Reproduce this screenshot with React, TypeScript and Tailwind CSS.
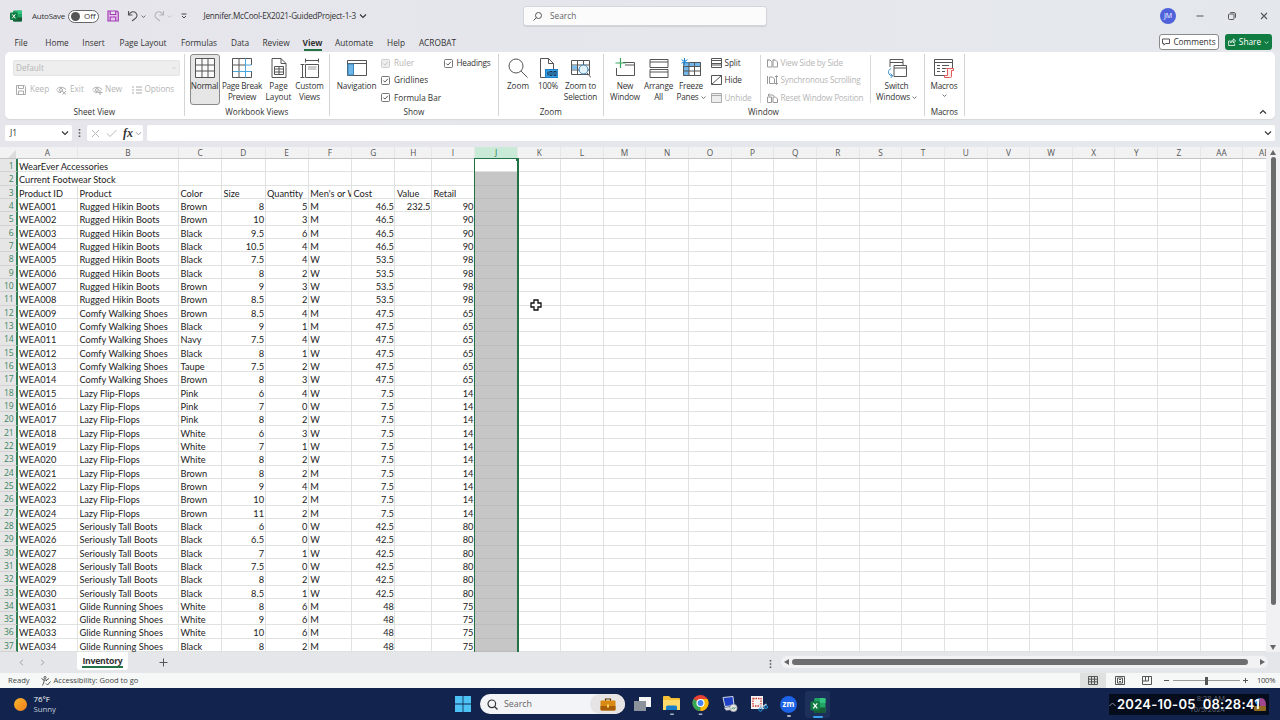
import type { ReactNode } from "react"

const cols = [
  { name: "A", w: "w-[60.5px]" },
  { name: "B", w: "w-[101px]" },
  { name: "C", w: "w-[43px]" },
  { name: "D", w: "w-[43.5px]" },
  { name: "E", w: "w-[43.3px]" },
  { name: "F", w: "w-[43.2px]" },
  { name: "G", w: "w-[43.5px]" },
  { name: "H", w: "w-[36.5px]" },
  { name: "I", w: "w-[43px]" },
  { name: "J", w: "w-[43.5px]" },
  ..."K L M N O P Q R S T U V W X Y Z AA AB".split(" ").map((name) => ({ name, w: "w-[42.65px]" })),
]

const boots = "Rugged Hikin Boots"
const shoes = "Comfy Walking Shoes"
const flops = "Lazy Flip-Flops"
const tall = "Seriously Tall Boots"
const glide = "Glide Running Shoes"

// product, color, size, quantity, men/women, cost, retail
const stock: (string | number)[][] = [
  [boots, "Brown", 8, 5, "M", 46.5, 90],
  [boots, "Brown", 10, 3, "M", 46.5, 90],
  [boots, "Black", 9.5, 6, "M", 46.5, 90],
  [boots, "Black", 10.5, 4, "M", 46.5, 90],
  [boots, "Black", 7.5, 4, "W", 53.5, 98],
  [boots, "Black", 8, 2, "W", 53.5, 98],
  [boots, "Brown", 9, 3, "W", 53.5, 98],
  [boots, "Brown", 8.5, 2, "W", 53.5, 98],
  [shoes, "Brown", 8.5, 4, "M", 47.5, 65],
  [shoes, "Black", 9, 1, "M", 47.5, 65],
  [shoes, "Navy", 7.5, 4, "W", 47.5, 65],
  [shoes, "Black", 8, 1, "W", 47.5, 65],
  [shoes, "Taupe", 7.5, 2, "W", 47.5, 65],
  [shoes, "Brown", 8, 3, "W", 47.5, 65],
  [flops, "Pink", 6, 4, "W", 7.5, 14],
  [flops, "Pink", 7, 0, "W", 7.5, 14],
  [flops, "Pink", 8, 2, "W", 7.5, 14],
  [flops, "White", 6, 3, "W", 7.5, 14],
  [flops, "White", 7, 1, "W", 7.5, 14],
  [flops, "White", 8, 2, "W", 7.5, 14],
  [flops, "Brown", 8, 2, "M", 7.5, 14],
  [flops, "Brown", 9, 4, "M", 7.5, 14],
  [flops, "Brown", 10, 2, "M", 7.5, 14],
  [flops, "Brown", 11, 2, "M", 7.5, 14],
  [tall, "Black", 6, 0, "W", 42.5, 80],
  [tall, "Black", 6.5, 0, "W", 42.5, 80],
  [tall, "Black", 7, 1, "W", 42.5, 80],
  [tall, "Black", 7.5, 0, "W", 42.5, 80],
  [tall, "Black", 8, 2, "W", 42.5, 80],
  [tall, "Black", 8.5, 1, "W", 42.5, 80],
  [glide, "White", 8, 6, "M", 48, 75],
  [glide, "White", 9, 6, "M", 48, 75],
  [glide, "White", 10, 6, "M", 48, 75],
  [glide, "Black", 8, 2, "M", 48, 75],
]

const rows: (string | number)[][] = [
  ["WearEver Accessories"],
  ["Current Footwear Stock"],
  ["Product ID", "Product", "Color", "Size", "Quantity", "Men's or W", "Cost", "Value", "Retail"],
  ...stock.map(([product, color, size, qty, mw, cost, retail], i) => [
    `WEA${String(i + 1).padStart(3, "0")}`,
    product,
    color,
    size,
    qty,
    mw,
    cost,
    i === 0 ? 232.5 : "",
    retail,
  ]),
]

function Svg({ w = 20, h = 20, box, className = "", children }: { w?: number; h?: number; box?: string; className?: string; children: ReactNode }) {
  return (
    <svg width={w} height={h} viewBox={box ?? `0 0 ${w} ${h}`} fill="none" stroke="#555" strokeWidth="1" className={`shrink-0 ${className}`}>
      {children}
    </svg>
  )
}

function Chevron({ size = 7, className = "" }: { size?: number; className?: string }) {
  return (
    <svg width={size} height={size} viewBox="0 0 8 8" fill="none" stroke="currentColor" strokeWidth="1.1" className={`shrink-0 ${className}`}>
      <path d="M1 2.5 4 5.5 7 2.5" />
    </svg>
  )
}

function TitleBar() {
  return (
    <div className="flex h-8 items-center pr-[12px] pl-[10px] whitespace-nowrap">
      <Svg w={12} h={12} className="mr-[10px]">
        <rect x="3" y="0.5" width="9" height="11" rx="1" fill="#21a366" stroke="none" />
        <path d="M7.500 .5H11a1 1 0 0 1 1 1v2.500H7.500z" fill="#33c481" stroke="none" />
        <path d="M3 7.500h9V10.500a1 1 0 0 1-1 1H4a1 1 0 0 1-1-1z" fill="#185c37" stroke="none" />
        <rect x="0" y="2.500" width="7.500" height="7.500" rx="1" fill="#107c41" stroke="none" />
        <path d="m2.200 4.300 3.200 4M5.400 4.300l-3.200 4" stroke="#fff" />
      </Svg>
      <span className="w-[32px] text-[8px] tracking-[-0.25px]">AutoSave</span>
      <div className="ml-[4px] flex h-[13px] w-[31px] items-center rounded-full border border-[#666] bg-white pl-[2px]">
        <span className="size-[9px] rounded-full bg-[#555]" />
        <span className="ml-[4px] text-[8px]">Off</span>
      </div>
      <Svg w={12} h={12} className="ml-[7.500px]">
        <path d="M1 1h9l1.300 1.300V11H1zM3.200 1v3.500h5.500V1M3.200 11V7h5.500v4" stroke="#a23fb5" strokeWidth="1.200" fill="#e9c5ef" />
      </Svg>
      <Svg w={12} h={12} className="ml-[8px]">
        <path d="M1.500 1v4h4M1.700 4.800C4 1.200 7 1 8.800 2.800s1.500 4-.3 5.500L5 11" strokeWidth="1.100" />
      </Svg>
      <Chevron size={5} className="ml-[2px]" />
      <Svg w={12} h={12} className="ml-[7px]">
        <path d="M10.500 1v4h-4M10.300 4.800C8 1.200 5 1 3.200 2.800s-1.500 4 .3 5.500L7 11" stroke="#b4b4ba" strokeWidth="1.100" />
      </Svg>
      <Chevron size={5} className="ml-[2px] text-[#b4b4ba]" />
      <Svg w={6} h={6} className="ml-[9px]">
        <path d="M.5 1h5M1 3l2 2 2-2" stroke="#444" />
      </Svg>
      <span className="ml-[17px] w-[154px] text-[8.200px] tracking-[-0.25px]">Jennifer.McCool-EX2021-GuidedProject-1-3</span>
      <Chevron size={8} className="ml-[1.500px]" />
      <div className="ml-[156px] flex h-[20px] w-[244px] items-center rounded-[3px] border border-[#d3d5da] bg-[#fbfbfc] pl-[9px] text-[#666] shadow-[0_1px_1px_#cfd1d6]">
        <Svg w={9} h={9}>
          <circle cx="5.500" cy="3.500" r="3" />
          <path d="M3.400 5.600.5 8.500" />
        </Svg>
        <span className="ml-[8px] text-[8.300px]">Search</span>
      </div>
      <span className="ml-auto flex size-4 items-center justify-center rounded-full bg-[#4f62dc] text-[7px] text-white">JM</span>
      <Svg w={8} h={8} className="ml-[20px]">
        <path d="M.5 4h7" />
      </Svg>
      <Svg w={8} h={8} className="ml-[24px]">
        <rect x=".5" y="2" width="5.500" height="5.500" rx="1" />
        <path d="M2.300.6H6A1.500 1.500 0 0 1 7.500 2v3.700" />
      </Svg>
      <Svg w={8} h={8} className="ml-[24px]">
        <path d="m1 1 6 6M7 1 1 7" strokeWidth="1.100" />
      </Svg>
    </div>
  )
}

const menu = [
  ["File", "w-[12px]"],
  ["Home", "w-[23px] ml-[18.5px]"],
  ["Insert", "w-[22px] ml-[14px]"],
  ["Page Layout", "w-[48px] ml-[14.5px]"],
  ["Formulas", "w-[36px] ml-[14px]"],
  ["Data", "w-[18px] ml-[14px]"],
  ["Review", "w-[27px] ml-[13.5px]"],
  ["View", "w-[18px] ml-[14px]"],
  ["Automate", "w-[38px] ml-[13.5px]"],
  ["Help", "w-[18px] ml-[14px]"],
  ["ACROBAT", "w-[38px] ml-[13.5px]"],
]

function MenuBar() {
  return (
    <div className="flex h-5 items-center pr-[8px] pl-[15px] text-[8.300px]">
      {menu.map(([label, cls]) => (
        <span
          key={label}
          className={`mt-[2px] flex h-[15px] shrink-0 items-center justify-center whitespace-nowrap ${cls} ${label === "View" ? "border-b-2 border-[#217346] pt-[2px] font-bold" : ""}`}
        >
          {label}
        </span>
      ))}
      <div className="ml-auto flex h-[16px] w-[60px] items-center justify-center gap-[3px] rounded-[3px] border border-[#8a8a8a] bg-white">
        <Svg w={8} h={8}>
          <path d="M.5 1h7v4.500H3.500l-1.500 1.700V5.500H.5z" />
        </Svg>
        Comments
      </div>
      <div className="ml-[6px] flex h-[16px] w-[47px] items-center justify-center gap-[3px] rounded-[3px] bg-[#107c41] text-white">
        <Svg w={8} h={8}>
          <path d="M2.500 3H.6v4.500h6V5.500M2.500 5c.2-2 1.300-2.700 3-2.700V.8l2 2.200-2 2V3.600C4 3.600 3.200 4 2.500 5z" stroke="#fff" strokeWidth=".8" />
        </Svg>
        Share
        <Chevron size={5} />
      </div>
    </div>
  )
}

function BigButton({ label, sub, className, arrow, children }: { label: string; sub?: string; className: string; arrow?: boolean; children: ReactNode }) {
  return (
    <div className={`flex h-[51px] shrink-0 flex-col items-center rounded-[3px] border pt-[3px] text-center whitespace-nowrap ${className}`}>
      {children}
      <span className="mt-[2px] leading-[12px]">{label}</span>
      <span className="flex items-center gap-[2px] leading-[10.500px]">
        {sub}
        {arrow && <Chevron size={5} className="mt-[1px]" />}
      </span>
    </div>
  )
}

function Group({ title, className, children }: { title: string; className: string; children: ReactNode }) {
  return (
    <div className={`flex h-[62px] shrink-0 flex-col border-r border-[#d4d4d4] ${className}`}>
      <div className="flex h-[51px] shrink-0">{children}</div>
      <div className="mt-[2px] text-center leading-[10px]">{title}</div>
    </div>
  )
}

function Check({ label, off }: { label: string; off?: boolean }) {
  return (
    <div className={`flex h-[17.300px] items-center gap-[4px] whitespace-nowrap ${off ? "text-[#b5b5b5]" : ""}`}>
      <svg width="9" height="9" viewBox="0 0 9 9" fill="none" stroke={off ? "#c4c4c4" : "#555"} className="shrink-0">
        <rect x=".5" y=".5" width="8" height="8" rx="1" strokeWidth=".8" fill={off ? "#eee" : "#fff"} />
        <path d="m2.300 4.500 1.600 1.600 3-3.300" />
      </svg>
      {label}
    </div>
  )
}

function SmallButton({ label, off, icon }: { label: string; off?: boolean; icon: ReactNode }) {
  return (
    <div className={`flex h-[17.300px] items-center gap-[3px] whitespace-nowrap ${off ? "text-[#b5b5b5]" : ""}`}>
      {icon}
      {label}
    </div>
  )
}

function Ribbon() {
  return (
    <div className="mx-[5px] flex h-[67px] items-start rounded-[5px] bg-white pt-[2px] text-[8.200px] shadow-[0_1px_1px_#d8d8dc]">
      <Group title="Sheet View" className="w-[179.500px]">
        <div className="flex flex-col pl-[8px] text-[#b5b5b5]">
          <div className="mt-[6px] flex h-[16px] w-[167px] items-center justify-between rounded-[2px] border border-[#e4e4e4] bg-[#eeeeee] pr-[3px] pl-[2px]">
            Default
            <Chevron size={4} />
          </div>
          <div className="mt-[5px] flex h-[17px] items-center pl-[3px]">
            <Svg w={10} h={10}>
              <path d="M.5.5h8l1 1v8h-9zM2.500.5v3h5v-3M2.500 9.500V6h5v3.500" stroke="#aaa" />
            </Svg>
            <span className="ml-[4px] w-[17px]">Keep</span>
            <Svg w={11} h={10} className="ml-[9px]">
              <path d="M.5 4.500C3 1.500 7 1.500 10 4.500M1 5.500c1 1.500 2.500 2 4 2M6 6l4 3.500M10 6 6.500 9.500" stroke="#aaa" />
              <circle cx="5" cy="5" r="1.500" stroke="#aaa" />
            </Svg>
            <span className="ml-[3px] w-[12px]">Exit</span>
            <Svg w={11} h={10} className="ml-[10px]">
              <path d="M.5 4.500C3 1.500 7 1.500 10 4.500M1 5.500c1 1.500 2.500 2 4 2M8 5v5M5.500 7.500h5" stroke="#aaa" />
              <circle cx="5" cy="5" r="1.500" stroke="#aaa" />
            </Svg>
            <span className="ml-[2px] w-[16px]">New</span>
            <Svg w={10} h={8} className="ml-[10.500px]">
              <path d="M0 1h2M4 1h6M0 4h2M4 4h6M0 7h2M4 7h6" stroke="#aaa" />
            </Svg>
            <span className="ml-[3px] tracking-[-0.1px]">Options</span>
          </div>
        </div>
      </Group>

      <Group title="Workbook Views" className="w-[145.500px]">
        <BigButton label="Normal" className="ml-[5px] w-[30px] border-[#8a8a8a] bg-[#e6e6e6] tracking-[-0.2px]">
          <Svg>
            <path d="M.5.500h19v19H.5zM7 .5v19M13 .5v19M.5 7h19M.5 13h19" fill="#fafafa" />
          </Svg>
        </BigButton>
        <BigButton label="Page Break" sub="Preview" className="w-[45px] border-transparent tracking-[-0.25px]">
          <Svg>
            <path d="M.5 13V.500h19V7M7 .5v19M.5 7h12.500M.5 13v6.500h19V13" />
            <path d="M13.500 .5v12.500M1 13.500h12.500M13.500 7h6M13.500 13.500h6M13.500 13v6.500" stroke="#4ba6dd" />
          </Svg>
        </BigButton>
        <BigButton label="Page" sub="Layout" className="w-[28px] border-transparent">
          <Svg>
            <path d="M3 .5h9l5 5v14H3zM12 .5v5h5" />
            <path d="M5.500 8.500h9v8h-9zM10 8.500v8M5.500 11h9M5.500 14h9" />
          </Svg>
        </BigButton>
        <BigButton label="Custom" sub="Views" className="w-[34px] border-transparent tracking-[-0.15px]">
          <Svg>
            <path d="M5.500 6.500h13v13h-13zM5 2.500h13.500M5.500.500v4M18.500.500v4M2.500 6.500v13M.5 6.500h4M.5 19.500h4" />
            <path d="M8 9h8.500M8 11h8.500" stroke="#999" />
          </Svg>
        </BigButton>
      </Group>

      <Group title="Show" className="w-[169px]">
        <BigButton label="Navigation" className="ml-[4.500px] w-[44px] border-transparent tracking-[-0.12px]">
          <Svg>
            <path d="M.5 2.500h19v15H.5zM.5 5.500h19" />
            <path d="M1 6h5.500v11H1z" fill="#6db7e8" stroke="#3c86bd" />
          </Svg>
        </BigButton>
        <div className="mt-[.5px] ml-[2.500px] w-[62.500px]">
          <Check label="Ruler" off />
          <Check label="Gridlines" />
          <Check label="Formula Bar" />
        </div>
        <div className="mt-[.5px] tracking-[-0.2px]">
          <Check label="Headings" />
        </div>
      </Group>

      <Group title="Zoom" className="w-[104.500px]">
        <BigButton label="Zoom" className="ml-[3.500px] w-[31px] border-transparent">
          <Svg>
            <circle cx="8" cy="8" r="7" />
            <path d="m13 13 6.500 6.500" />
          </Svg>
        </BigButton>
        <BigButton label="100%" className="w-[29px] border-transparent tracking-[-0.2px]">
          <Svg>
            <path d="M2.500 19.500V.500h8l5 5V11M10.500.500v5h5M2.500 19.500H7" />
            <rect x="7.500" y="11.500" width="12.500" height="8" fill="#3aa0e6" stroke="#1a7ec4" />
            <path d="M10 13.500v4" stroke="#123" />
            <rect x="12" y="13.500" width="2" height="4" stroke="#123" strokeWidth=".8" />
            <rect x="16" y="13.500" width="2" height="4" stroke="#123" strokeWidth=".8" />
          </Svg>
        </BigButton>
        <BigButton label="Zoom to" sub="Selection" className="w-[36px] border-transparent tracking-[-0.15px]">
          <Svg>
            <path d="M.5 2.500h18v14H.5zM.5 7h18M.5 12h18M6.500 2.500v14M12.500 2.500v14" />
            <path d="M1 7.500h5v4H1z" fill="#7dbdec" stroke="none" />
            <circle cx="12.500" cy="11.500" r="4.500" fill="#e4f2fc" stroke="#3380b8" />
            <path d="m16 15 4 4.500" />
          </Svg>
        </BigButton>
      </Group>

      <Group title="Window" className="w-[321px]">
        <BigButton label="New" sub="Window" className="ml-[5px] w-[33px] border-transparent tracking-[-0.15px]">
          <Svg>
            <path d="M8 4.500h11.500v13H1.500V10M10 7h9.500" />
            <path d="M5.500 0v10M.5 5h10" stroke="#3ba55d" strokeWidth="1.200" />
          </Svg>
        </BigButton>
        <BigButton label="Arrange" sub="All" className="w-[34px] border-transparent tracking-[-0.2px]">
          <Svg>
            <path d="M1 1.500h18v8H1zM1 4h18M1 11.500h18v8H1zM1 14h18" />
          </Svg>
        </BigButton>
        <BigButton label="Freeze" sub="Panes" arrow className="w-[31px] border-transparent tracking-[-0.2px]">
          <Svg>
            <path d="M2.500 4.500h17v13h-17z" fill="#fff" />
            <path d="M2.500 4.500h5.500v13H2.500zM8 4.500h11.500V8H8z" fill="#72b7ec" stroke="none" />
            <path d="M2.500 8v9.500h17v-13H9M8 4.500v13M13.500 4.500v13M2.500 8.500h17M2.500 13h17" />
            <path d="M3.500 0v7M.5 1.700l6 3.600M6.500 1.700l-6 3.600" stroke="#1e83d2" />
          </Svg>
        </BigButton>
        <div className="mt-[.5px] ml-[4px] w-[49px] tracking-[-0.1px]">
          <SmallButton
            label="Split"
            icon={
              <Svg w={11} h={10}>
                <path d="M.5.500h10v9H.5zM.5 2.500h10M.5 5.500h10M.5 7h10" />
              </Svg>
            }
          />
          <SmallButton
            label="Hide"
            icon={
              <Svg w={11} h={10}>
                <path d="M.5.500h10v9H.5zM.5 9.500l10-9" />
              </Svg>
            }
          />
          <SmallButton
            label="Unhide"
            off
            icon={
              <Svg w={11} h={10}>
                <path d="M.5.500h10v9H.5zM.5 2.500h10" stroke="#aaa" fill="#eee" />
              </Svg>
            }
          />
        </div>
        <div className="mt-[.5px] h-[48px] w-[111.500px] border-x border-[#d8d8d8] pl-[6px] tracking-[-0.2px]">
          <SmallButton
            label="View Side by Side"
            off
            icon={
              <Svg w={11} h={9}>
                <path d="M.5 1h2.500l2 2v5H.5zM6 1h2.500l2 2v5H6zM0 1h2M5.500 1h2" stroke="#999" />
              </Svg>
            }
          />
          <SmallButton
            label="Synchronous Scrolling"
            off
            icon={
              <Svg w={11} h={10}>
                <path d="M.5 1v8M2.500 2h3l2 2v4.500h-5zM9.500 1v8M8 2l1.500-1.500L11 2M8 8l1.500 1.500L11 8" stroke="#999" />
              </Svg>
            }
          />
          <SmallButton
            label="Reset Window Position"
            off
            icon={
              <Svg w={11} h={10}>
                <path d="M.5 4h4v5.500h-4zM6 4h2.500l2 2v3.500H6zM1 2h4c1.500 0 2 .5 2 1.500M2.500.500 1 2l1.500 1.500" stroke="#999" />
              </Svg>
            }
          />
        </div>
        <BigButton label="Switch" sub="Windows" arrow className="ml-[4px] w-[43px] border-transparent tracking-[-0.15px]">
          <Svg>
            <path d="M3 9V1.500h13V7M3 4.500h13M7 7.500h12.500v11H7zM7 10h12.500" />
            <path d="M4 10.500c-4 2-3 7 1.500 7.500M3.500 15.500l2.200 2.500-2.200 2" stroke="#2f8ad0" />
          </Svg>
        </BigButton>
      </Group>

      <Group title="Macros" className="w-[40.500px] tracking-[-0.2px]">
        <BigButton label="Macros" arrow className="w-[39px] border-transparent">
          <Svg>
            <path d="M11 17.500H.5v-16h18V10M.5 4.500h18M3 7.500h3M8 7.500h7M3 10.500h3M8 10.500h4M3 13.500h3M8 13.500h3" />
            <path d="M12.500 10.500h7v2h-2v5.500c0 1.500-.5 1.500-2 1.500h-5v-2h3v-6z" fill="#fdeeee" stroke="#e05a5a" />
          </Svg>
        </BigButton>
      </Group>
      <Chevron size={8} className="mt-[54px] mr-[8px] ml-auto rotate-180" />
    </div>
  )
}

function FormulaBar() {
  return (
    <div className="mx-[5px] mt-[6px] flex h-[16px] items-center">
      <div className="flex h-full w-[67px] items-center justify-between rounded-[2px] bg-white pr-[3px] pl-[5px] text-[8.500px]">
        J1
        <Chevron size={8} />
      </div>
      <Svg w={3} h={8} className="ml-[6px]">
        <path d="M1.500 0v1.600M1.500 3.200v1.600M1.500 6.400V8" strokeWidth="1.600" />
      </Svg>
      <div className="ml-[6px] flex h-full w-[56px] items-center rounded-[2px] bg-white pl-[4px]">
        <Svg w={9} h={9}>
          <path d="m1 1 7 7M8 1 1 8" stroke="#b8b8b8" />
        </Svg>
        <Svg w={11} h={9} className="ml-[6px]">
          <path d="m1 4.500 3 3L10.500 1" stroke="#b8b8b8" />
        </Svg>
        <span className="ml-[6px] font-['Liberation_Serif'] text-[12px] leading-none font-bold italic">fx</span>
        <Chevron size={7} className="ml-[2px] text-[#999]" />
      </div>
      <div className="ml-[4px] flex h-full flex-1 items-center justify-end rounded-[2px] bg-white pr-[3px]">
        <Chevron size={8} />
      </div>
    </div>
  )
}

function Sheet() {
  return (
    <div className="mt-[6px] flex h-[505px]">
      <div className="relative w-[1266px] shrink-0 overflow-hidden bg-white font-['Lato',sans-serif] text-[9.250px] text-[#222]">
        <div className="flex h-[12px] border-b border-[#c4c4c4] bg-[#f2f2f3] font-['Open_Sans',sans-serif] text-[8.300px] leading-[12.500px] text-[#555]">
          <div className="flex w-[17.500px] shrink-0 justify-end pt-[3px] pr-[2px]">
            <svg width="8" height="8" viewBox="0 0 8 8">
              <path d="M8 0v8H0z" fill="#dcdcdc" />
            </svg>
          </div>
          {cols.map((c) => (
            <div
              key={c.name}
              className={`shrink-0 border-r border-[#e6e6e8] text-center ${c.w} ${c.name === "J" ? "bg-[#caead8] text-[#217346]" : ""}`}
            >
              {c.name}
            </div>
          ))}
        </div>
        {rows.map((row, r) => (
          <div key={r} className="flex h-[13.340px] leading-[15px] whitespace-nowrap">
            <div className="w-[17.500px] shrink-0 border-r-2 border-b border-r-[#2f7d55] border-b-[#d2d2d2] bg-[#e6e6e7] pr-[2px] text-right font-['Open_Sans',sans-serif] text-[8.600px] tracking-[-0.2px] text-[#3a8560]">
              {r + 1}
            </div>
            {cols.map((c, i) => {
              const value = row[i] ?? ""
              if (r < 2 && i === 1) return null
              if (r < 2 && i === 0)
                return (
                  <div key={c.name} className="w-[161.500px] shrink-0 border-r border-b border-[#e0e2e0] pl-[1.500px]">
                    {value}
                  </div>
                )
              const tone = c.name === "J" && r > 0 ? "bg-[#c6c6c6] border-[#bcbcbc]" : "border-[#e0e2e0]"
              return (
                <div
                  key={c.name}
                  className={`shrink-0 overflow-x-clip border-r border-b pl-[1.500px] ${c.w} ${tone} ${typeof value === "number" ? "pr-[.5px] text-right" : ""}`}
                >
                  {value}
                </div>
              )
            })}
          </div>
        ))}
        <div className="absolute top-[11px] left-[474px] h-[500px] w-[45px] border-t border-r-2 border-l border-[#217346]" />
        <div className="absolute top-[11px] left-[516px] size-[3px] bg-[#217346]" />
        <svg width="12" height="12" viewBox="0 0 12 12" className="absolute top-[152px] left-[530px]">
          <path d="M4 1h4v3h3v4H8v3H4V8H1V4h3z" fill="#fff" stroke="#111" strokeWidth="1.300" />
        </svg>
      </div>
      <div className="flex flex-1 flex-col items-center bg-[#f1f1f3] py-[2px]">
        <svg width="6" height="5" viewBox="0 0 6 5" className="mt-[1px]">
          <path d="M3 0 6 5H0z" fill="#666" />
        </svg>
        <div className="mt-[2px] h-[448px] w-[5px] rounded-full bg-[#6b6b6b]" />
        <svg width="6" height="5" viewBox="0 0 6 5" className="mt-auto">
          <path d="M3 5 6 0H0z" fill="#666" />
        </svg>
      </div>
    </div>
  )
}

function SheetTabs() {
  return (
    <div className="flex h-[21px] items-center bg-[#e5e6ea]">
      <Chevron size={7} className="ml-[18px] rotate-90 text-[#999]" />
      <Chevron size={7} className="ml-[14px] -rotate-90 text-[#999]" />
      <div className="mt-[-3px] ml-[31px] flex h-[18px] w-[51px] justify-center rounded-b-[3px] bg-white">
        <span className="h-[16px] w-[41px] border-b-2 border-[#217346] text-center text-[8.700px] leading-[18px] font-bold tracking-[-0.25px]">Inventory</span>
      </div>
      <Svg w={9} h={9} className="ml-[31px]">
        <path d="M4.500.500v8M.5 4.500h8" />
      </Svg>
      <Svg w={3} h={8} className="mt-[2px] ml-[600.500px]">
        <path d="M1.500 0v1.600M1.500 3.200v1.600M1.500 6.400V8" strokeWidth="1.600" />
      </Svg>
      <div className="mt-[-1px] ml-[9px] flex h-[12px] w-[487px] items-center justify-between rounded-full bg-[#f2f2f4] px-[3px]">
        <svg width="5" height="6" viewBox="0 0 5 6">
          <path d="M0 3 5 0v6z" fill="#666" />
        </svg>
        <div className="h-[6px] w-[456px] rounded-full bg-[#6e6e6e]" />
        <svg width="5" height="6" viewBox="0 0 5 6" className="ml-[8px]">
          <path d="M5 3 0 0v6z" fill="#666" />
        </svg>
      </div>
    </div>
  )
}

function StatusBar() {
  return (
    <div className="flex h-[15px] items-center bg-[#f6f8f8] pr-[5px] pl-[8px] text-[7.600px] text-[#444]">
      <span className="w-[21px]">Ready</span>
      <Svg w={10} h={10} className="ml-[12px]">
        <circle cx="4" cy="1.500" r="1" />
        <path d="M.5 2.500 3 4v2L1.500 9.500M8 2.500 5.500 4v1M3 4h2.500" />
        <path d="m5 7.500 1.500 1.500 3-3.500" />
      </Svg>
      <span className="ml-[2.500px] tracking-[-0.03px]">Accessibility: Good to go</span>
      <div className="ml-auto flex h-full w-[26px] items-center justify-center bg-[#dfe1e1]">
        <Svg w={10} h={9}>
          <path d="M.5.500h9v8h-9zM3.500.500v8M6.500.500v8M.5 3.200h9M.5 5.800h9" />
        </Svg>
      </div>
      <Svg w={10} h={9} className="ml-[9px]">
        <path d="M.5.500h9v8h-9zM2.500 2h5v5h-5zM4 3.500h2M4 5.500h2" />
      </Svg>
      <Svg w={10} h={9} className="ml-[17px]">
        <path d="M.5.500h9v8h-9zM.5 5h6V.500M3.500.500v4.500" />
      </Svg>
      <Svg w={5} h={5} className="ml-[12px]">
        <path d="M0 2.500h5" />
      </Svg>
      <div className="ml-[4px] flex h-px w-[67px] items-center justify-center bg-[#999]">
        <span className="h-[8px] w-[3px] bg-[#555]" />
      </div>
      <Svg w={5} h={5} className="ml-[3px]">
        <path d="M0 2.500h5M2.500 0v5" />
      </Svg>
      <span className="ml-[9px] w-[18px] tracking-[-0.3px]">100%</span>
    </div>
  )
}

function Taskbar() {
  return (
    <div className="flex h-[32px] items-center bg-[#12244d] pl-[14px]">
      <span className="size-[13px] rounded-full bg-linear-to-br from-[#f9b62c] to-[#ee7d1d]" />
      <div className="ml-[6.500px] w-[421.500px] text-[7.800px] leading-[10.500px] text-white">
        <div>76°F</div>
        <div className="text-[#c3cbdc]">Sunny</div>
      </div>
      <Svg w={16} h={16}>
        <path d="M0 0h7.600v7.600H0zM8.400 0H16v7.600H8.400zM0 8.400h7.600V16H0zM8.400 8.400H16V16H8.400z" fill="#4cc2f5" stroke="none" />
      </Svg>
      <div className="ml-[9px] flex h-[20px] w-[145px] items-center rounded-full bg-[#f3f4f7] pl-[7px]">
        <Svg w={11} h={11}>
          <circle cx="4.800" cy="4.800" r="3.800" stroke="#333" strokeWidth="1.200" />
          <path d="m7.500 7.500 3 3" stroke="#333" strokeWidth="1.300" />
        </Svg>
        <span className="mt-[1px] ml-[6px] text-[8.800px] text-[#666]">Search</span>
        <div className="ml-auto flex h-full w-[35px] items-center justify-center rounded-full bg-[#e6e4e4]">
          <Svg w={16} h={13}>
            <path d="M5.500 3V1h5v2" stroke="#5d3409" strokeWidth="1.200" />
            <rect x=".5" y="2.500" width="15" height="10" rx="1" fill="#d98a14" stroke="none" />
            <path d="M.5 8h15v3.500a1 1 0 0 1-1 1h-13a1 1 0 0 1-1-1z" fill="#a85d0a" stroke="none" />
            <rect x="7" y="6.500" width="2" height="3" fill="#fbd25a" stroke="none" />
          </Svg>
        </div>
      </div>
      <Svg w={17} h={16} className="ml-[9px]">
        <rect x="5" y="1" width="12" height="10" fill="#f6f6f6" stroke="none" />
        <rect x="0" y="5" width="12" height="10" fill="#8d939d" stroke="none" />
      </Svg>
      <Svg w={17} h={22} className="mt-[4px] ml-[12px]">
        <path d="M0 2a1 1 0 0 1 1-1h5l2 2h8a1 1 0 0 1 1 1v11H0z" fill="#f5bf36" stroke="none" />
        <path d="M0 5h17v10H0z" fill="#ffda6b" stroke="none" />
        <path d="M3 15v-3a1.500 1.500 0 0 1 1.500-1.500h8A1.500 1.500 0 0 1 14 12v3z" fill="#1a7fc9" stroke="none" />
        <rect x="7" y="18.500" width="4" height="1.500" rx=".7" fill="#aab3c8" stroke="none" />
      </Svg>
      <Svg w={17} h={22} className="mt-[4px] ml-[12px]">
        <circle cx="8.500" cy="8" r="8" fill="#e94335" stroke="none" />
        <path d="M8.500 8 1.570 4A8 8 0 0 0 8.500 16z" fill="#34a853" stroke="none" />
        <path d="M8.500 8v8A8 8 0 0 0 15.430 4H8.500z" fill="#fbbc05" stroke="none" />
        <circle cx="8.500" cy="8" r="3.500" fill="#4285f4" stroke="#fff" strokeWidth="1.200" />
        <rect x="6.500" y="18.500" width="4" height="1.500" rx=".7" fill="#aab3c8" stroke="none" />
      </Svg>
      <Svg w={16} h={16} className="ml-[13px]">
        <path d="M1 1.500 11 .5l1 9-9 1z" fill="#1f3fc4" stroke="#cfd6e6" />
        <path d="m2 11.500 6-.5 1 3-5 .5z" fill="#d5d8de" stroke="none" />
        <circle cx="11.500" cy="12" r="3.700" fill="#e3e5e3" stroke="#889" strokeWidth=".6" />
        <path d="m9.500 13 2-1.500M11.500 13l2-1.500" stroke="#3c8b4c" />
      </Svg>
      <Svg w={17} h={16} className="ml-[13px]">
        <rect x="0" y="0" width="12" height="13" fill="#f7f3f2" stroke="none" />
        <rect x="2" y="2.500" width="8" height="7.500" stroke="#cf3a32" strokeWidth="1.300" strokeDasharray="1.500 1" />
        <path d="m8 8 5 5M15.500 8 9.500 12" stroke="#cfd6e0" strokeWidth="1.200" />
        <circle cx="9.500" cy="13.500" r="1.700" stroke="#2b9be0" />
        <circle cx="15" cy="11" r="1.500" stroke="#2b9be0" />
      </Svg>
      <div className="mt-[5px] ml-[12px] flex flex-col items-center">
        <span className="flex size-[17px] items-center justify-center rounded-full bg-[#1d63e8] pb-[1px] text-[8px] font-bold text-white">zm</span>
        <span className="mt-[2px] h-[2px] w-[4px] rounded-full bg-[#aab3c8]" />
      </div>
      <div className="ml-[8px] flex h-[27px] w-[25px] flex-col items-center justify-end rounded-[3px] bg-[#1c3059]">
        <Svg w={16} h={15} box="0 0 12 12">
          <rect x="3" y="0" width="9" height="12" rx="1" fill="#21a366" stroke="none" />
          <path d="M7.500 0H11a1 1 0 0 1 1 1v3H7.500z" fill="#33c481" stroke="none" />
          <path d="M3 7.500h9V11a1 1 0 0 1-1 1H4a1 1 0 0 1-1-1z" fill="#185c37" stroke="none" />
          <rect x="0" y="2.500" width="7.500" height="7.500" rx="1" fill="#107c41" stroke="none" />
          <path d="m2.200 4.300 3.200 4M5.400 4.300l-3.200 4" stroke="#fff" />
        </Svg>
        <span className="mt-[3px] h-[2px] w-[10px] rounded-full bg-[#3aa0ee]" />
      </div>
      <div className="relative mr-[11px] ml-auto flex h-[21px] w-[160px] items-center bg-[#050c1c] pl-[8px]">
        <Svg w={7} h={5} className="absolute left-0">
          <path d="m.5 4 3-3 3 3" stroke="#8a8f9c" />
        </Svg>
        <div className="absolute right-[44px] text-right text-[7.500px] leading-[11px] text-[#62697a]">
          <div>8:28 AM</div>
          <div>10/5/2024</div>
        </div>
        <Svg w={13} h={14} className="absolute right-[2px]">
          <path d="M1 6c0-4 3-5 5-5l-1 8z" fill="#2f7fd0" stroke="none" />
          <path d="M6 1c5 0 6 3 6 8H6z" fill="#a1478f" stroke="none" />
          <rect x="0" y="9" width="12" height="5" rx="1" fill="#8f6a1f" stroke="none" />
        </Svg>
        <span className="relative mt-[1px] font-['Inter',sans-serif] text-[13px] font-semibold tracking-[0.250px] whitespace-pre text-white">2024-10-05  08:28:41</span>
      </div>
    </div>
  )
}

export default function App() {
  return (
    <div className="h-[720px] w-[1280px] overflow-hidden bg-linear-to-r from-[#e6e5ec] to-[#e4e8ec] font-['Open_Sans','Noto_Sans',sans-serif] text-[#333]">
      <TitleBar />
      <MenuBar />
      <Ribbon />
      <FormulaBar />
      <Sheet />
      <SheetTabs />
      <StatusBar />
      <Taskbar />
    </div>
  )
}
